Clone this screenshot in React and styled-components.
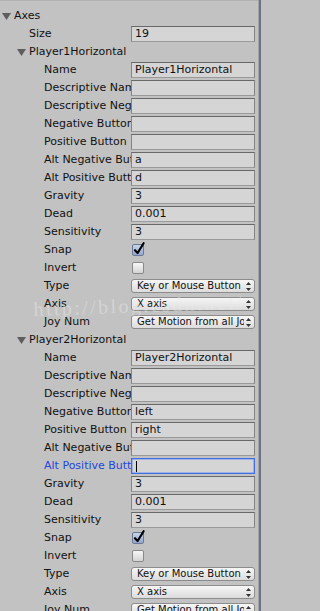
import React from "react";
import styled, { createGlobalStyle, css } from "styled-components";

const Global = createGlobalStyle`
  html, body { margin: 0; padding: 0; background: #c2c2c2; }
  body { font-family: "DejaVu Sans", Verdana, sans-serif; font-size: 11px; color: #111; }
`;

const Page = styled.div`
  position: relative;
  width: 261px;
  height: 611px;
  overflow: hidden;
  display: flex;
  background: #c2c2c2;
`;

const Main = styled.div`
  flex: 1;
  display: flex;
  flex-direction: column;
`;

const Edge = styled.div`
  width: 3px;
  flex: 0 0 3px;
  background: linear-gradient(to right, #a4a4a4 0 1px, #6a7386 1px 100%);
`;

const TopStrip = styled.div`
  height: 3px;
  background: #e0e0e0;
  border-bottom: 1px solid #b2b2b2;
`;

const List = styled.div`
  padding-top: 6px;
  display: flex;
  flex-direction: column;
`;

const Row = styled.div`
  height: 18px;
  display: grid;
  grid-template-columns: 131px 124px;
  align-items: center;
`;

const Label = styled.div`
  padding-left: ${(p) => p.$indent}px;
  line-height: 18px;
  white-space: nowrap;
  overflow: hidden;
  color: ${(p) => (p.$focused ? "#2446dc" : "#111")};
`;

const FoldRow = styled.div`
  height: 18px;
  display: flex;
  align-items: center;
  padding-left: ${(p) => p.$indent}px;
  line-height: 18px;
  white-space: nowrap;
  color: #111;
`;

const Arrow = styled.svg`
  width: 9px;
  height: 7px;
  margin-right: 3px;
  flex: 0 0 9px;
`;

const TextField = styled.div`
  box-sizing: border-box;
  height: 16px;
  padding-left: 3px;
  line-height: 14px;
  white-space: nowrap;
  overflow: hidden;
  background: #d5d5d5;
  border: 1px solid #848484;
  border-top-color: #686868;
  border-bottom-color: #9a9a9a;
  color: #111;
  display: flex;
  align-items: center;
  ${(p) =>
    p.$focused &&
    css`
      border-color: #3f6ee6;
      box-shadow: inset 0 0 0 0.5px #6a8ff0;
    `}
`;

const Caret = styled.span`
  display: inline-block;
  width: 1px;
  height: 11px;
  background: #000;
  margin-left: 1px;
`;

const Popup = styled.div`
  box-sizing: border-box;
  height: 14px;
  border: 1px solid #8c8c8c;
  border-radius: 3px;
  background: linear-gradient(#f6f6f6, #dcdcdc);
  display: flex;
  align-items: center;
  padding-left: 5px;
  padding-right: 3px;
  font-size: 10px;
  color: #111;
`;

const PopupText = styled.span`
  flex: 1;
  overflow: hidden;
  white-space: nowrap;
  line-height: 12px;
`;

const PopupArrows = styled.svg`
  width: 5px;
  height: 9px;
  flex: 0 0 5px;
  margin-left: 2px;
`;

const CheckBox = styled.div`
  position: relative;
  box-sizing: border-box;
  width: 12px;
  height: 12px;
  margin-left: 1px;
  border-radius: 2px;
  border: 1px solid ${(p) => (p.$checked ? "#6a7893" : "#8a8a8a")};
  background: ${(p) =>
    p.$checked
      ? "linear-gradient(#c9d4ea, #92a7cf)"
      : "linear-gradient(#f7f7f7, #d4d4d4)"};
`;

const CheckMark = styled.svg`
  position: absolute;
  left: 0px;
  top: -3px;
  width: 12px;
  height: 13px;
  overflow: visible;
`;

const Watermark = styled.div`
  position: absolute;
  left: 34px;
  top: 298px;
  font-family: "Liberation Serif", serif;
  font-size: 20px;
  letter-spacing: 2.4px;
  color: rgba(235, 235, 235, 0.45);
  transform: rotate(-2deg);
  transform-origin: left bottom;
  pointer-events: none;
  white-space: nowrap;
`;

const FoldArrow = () => (
  <Arrow viewBox="0 0 9 7">
    <polygon points="0,0 9,0 4.5,7" fill="#5e5e5e" />
  </Arrow>
);

const UpDown = () => (
  <PopupArrows viewBox="0 0 5 9">
    <polygon points="2.5,0 5,3 0,3" fill="#333" />
    <polygon points="0,6 5,6 2.5,9" fill="#333" />
  </PopupArrows>
);

const makeAxis = (name, v) => [
  { label: "Name", kind: "text", value: name },
  { label: "Descriptive Name", kind: "text", value: "" },
  { label: "Descriptive Negative Name", kind: "text", value: "" },
  { label: "Negative Button", kind: "text", value: v.neg },
  { label: "Positive Button", kind: "text", value: v.pos },
  { label: "Alt Negative Button", kind: "text", value: v.altNeg },
  { label: "Alt Positive Button", kind: "text", value: v.altPos, focused: v.focusAltPos },
  { label: "Gravity", kind: "text", value: "3" },
  { label: "Dead", kind: "text", value: "0.001" },
  { label: "Sensitivity", kind: "text", value: "3" },
  { label: "Snap", kind: "check", value: true },
  { label: "Invert", kind: "check", value: false },
  { label: "Type", kind: "popup", value: "Key or Mouse Button" },
  { label: "Axis", kind: "popup", value: "X axis" },
  { label: "Joy Num", kind: "popup", value: "Get Motion from all Joysticks" },
];

const axes = [
  { name: "Player1Horizontal", fields: makeAxis("Player1Horizontal", { neg: "", pos: "", altNeg: "a", altPos: "d" }) },
  { name: "Player2Horizontal", fields: makeAxis("Player2Horizontal", { neg: "left", pos: "right", altNeg: "", altPos: "", focusAltPos: true }) },
];

const Control = ({ f }) => {
  if (f.kind === "check")
    return (
      <CheckBox $checked={f.value}>
        {f.value && (
          <CheckMark viewBox="0 0 12 13">
            <path d="M2 8.2 L4.6 11 L10.6 1.2" fill="none" stroke="#000" strokeWidth="2.2" strokeLinecap="round" strokeLinejoin="round" />
          </CheckMark>
        )}
      </CheckBox>
    );
  if (f.kind === "popup")
    return (
      <Popup>
        <PopupText>{f.value}</PopupText>
        <UpDown />
      </Popup>
    );
  return (
    <TextField $focused={f.focused}>
      {f.value}
      {f.focused && <Caret />}
    </TextField>
  );
};

export default function App() {
  return (
    <>
      <Global />
      <Page>
        <Main>
          <TopStrip />
          <List>
            <FoldRow $indent={2}>
              <FoldArrow />
              Axes
            </FoldRow>
            <Row>
              <Label $indent={29}>Size</Label>
              <TextField>19</TextField>
            </Row>
            {axes.map((a) => (
              <React.Fragment key={a.name}>
                <FoldRow $indent={17}>
                  <FoldArrow />
                  {a.name}
                </FoldRow>
                {a.fields.map((f) => (
                  <Row key={f.label}>
                    <Label $indent={44} $focused={f.focused}>
                      {f.label}
                    </Label>
                    <Control f={f} />
                  </Row>
                ))}
              </React.Fragment>
            ))}
          </List>
        </Main>
        <Edge />
        <Watermark>http://blog.csdn.net/</Watermark>
      </Page>
    </>
  );
}
